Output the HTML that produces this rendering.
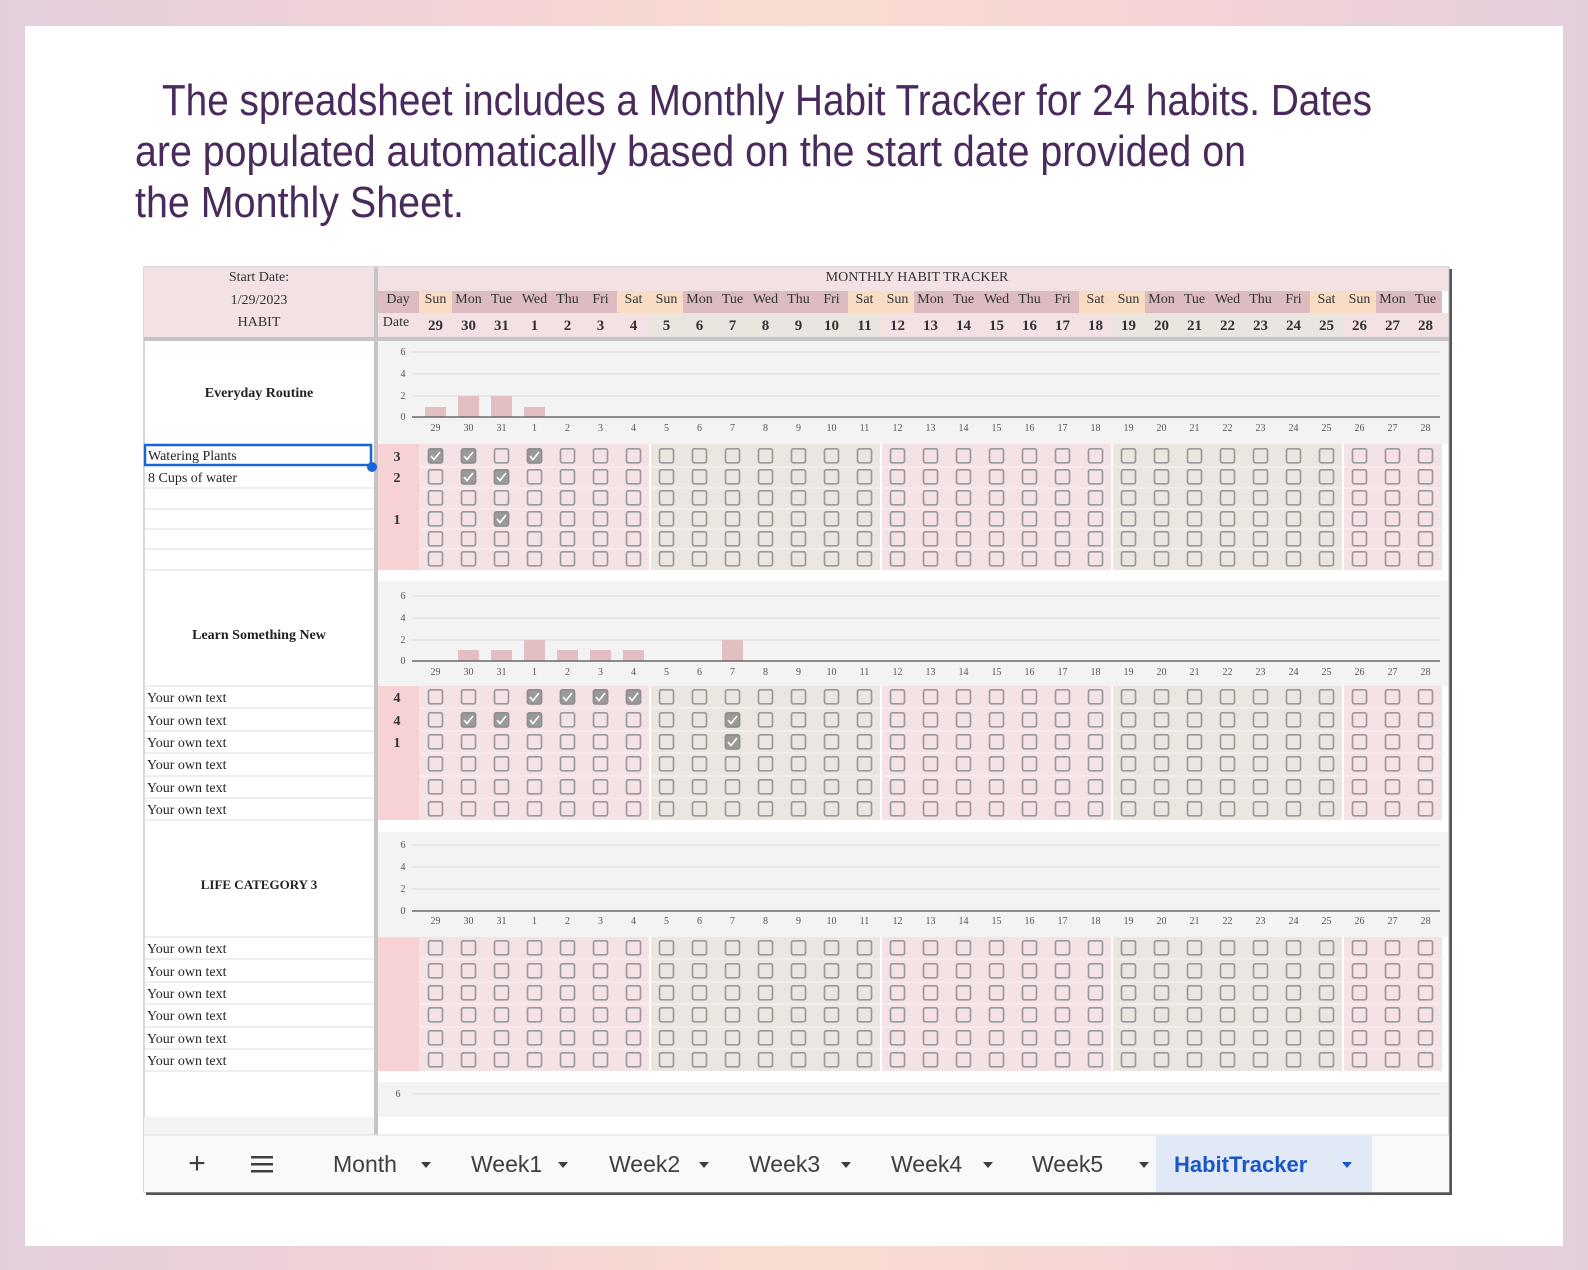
<!DOCTYPE html>
<html><head><meta charset="utf-8"><style>
html,body{margin:0;padding:0;width:1588px;height:1270px;overflow:hidden}
body{background:linear-gradient(90deg,#e3cfdc 0%,#f3d3d6 30%,#f9ddd0 50%,#f4d3d6 75%,#e3cfdc 100%)}
svg{position:absolute;left:0;top:0}
</style></head><body>
<svg width="1588" height="1270" viewBox="0 0 1588 1270" xmlns="http://www.w3.org/2000/svg">
<defs>
<pattern id="cb" patternUnits="userSpaceOnUse" x="419" y="0" width="33" height="16">
<rect x="9.5" y="0.8" width="14" height="14" rx="2" fill="none" stroke="#9a9a9a" stroke-width="1.7"/>
</pattern>
<g id="ck"><rect x="-7" y="-7" width="14" height="14" rx="2" fill="#9a9a9a" stroke="#8e8e8e" stroke-width="1.5"/><polyline points="-4.5,0 -1.5,3.5 4.5,-4" fill="none" stroke="#fff" stroke-width="1.6"/></g>
</defs>
<rect x="25" y="26" width="1538" height="1220" fill="#fff"/>
<g font-family="'Liberation Sans',sans-serif" font-size="44" fill="#4a2a5c">
<text x="162" y="115" textLength="1210" lengthAdjust="spacingAndGlyphs">The spreadsheet includes a Monthly Habit Tracker for 24 habits. Dates</text>
<text x="135" y="166" textLength="1111" lengthAdjust="spacingAndGlyphs">are populated automatically based on the start date provided on</text>
<text x="135" y="217" textLength="329" lengthAdjust="spacingAndGlyphs">the Monthly Sheet.</text>
</g>
<!-- sheet -->
<rect x="146" y="269" width="1306" height="926" fill="#555"/>
<rect x="144" y="267" width="1305" height="925" fill="#fff" stroke="#b0b0b0" stroke-width="1"/>
<!-- header -->
<rect x="144" y="267" width="231" height="70" fill="#f3e1e3"/>
<rect x="378" y="267" width="1070" height="24" fill="#f3e1e3"/>
<rect x="378" y="291" width="1064" height="22" fill="#dcbcc0"/>
<g fill="#f8dcc4"><rect x="419" y="291" width="33" height="22"/><rect x="617" y="291" width="66" height="22"/><rect x="848" y="291" width="66" height="22"/><rect x="1079" y="291" width="66" height="22"/><rect x="1310" y="291" width="66" height="22"/></g>
<rect x="378" y="313" width="1070" height="24" fill="#f3e1e3"/>
<g fill="#ebe5e0"><rect x="650" y="313" width="231" height="24"/><rect x="1112" y="313" width="231" height="24"/></g>
<rect x="144" y="337" width="1305" height="4" fill="#c4c4c4"/>
<rect x="374" y="267" width="4" height="868" fill="#c4c4c4"/>
<g font-family="'Liberation Serif',serif" fill="#333" font-size="14" text-anchor="middle">
<text x="259" y="281">Start Date:</text><text x="259" y="304">1/29/2023</text><text x="259" y="326">HABIT</text>
<text x="917" y="281">MONTHLY HABIT TRACKER</text>
<text x="398" y="303">Day</text><text x="396" y="326">Date</text>
<text y="303"><tspan x="435.5">Sun</tspan><tspan x="468.5">Mon</tspan><tspan x="501.5">Tue</tspan><tspan x="534.5">Wed</tspan><tspan x="567.5">Thu</tspan><tspan x="600.5">Fri</tspan><tspan x="633.5">Sat</tspan><tspan x="666.5">Sun</tspan><tspan x="699.5">Mon</tspan><tspan x="732.5">Tue</tspan><tspan x="765.5">Wed</tspan><tspan x="798.5">Thu</tspan><tspan x="831.5">Fri</tspan><tspan x="864.5">Sat</tspan><tspan x="897.5">Sun</tspan><tspan x="930.5">Mon</tspan><tspan x="963.5">Tue</tspan><tspan x="996.5">Wed</tspan><tspan x="1029.5">Thu</tspan><tspan x="1062.5">Fri</tspan><tspan x="1095.5">Sat</tspan><tspan x="1128.5">Sun</tspan><tspan x="1161.5">Mon</tspan><tspan x="1194.5">Tue</tspan><tspan x="1227.5">Wed</tspan><tspan x="1260.5">Thu</tspan><tspan x="1293.5">Fri</tspan><tspan x="1326.5">Sat</tspan><tspan x="1359.5">Sun</tspan><tspan x="1392.5">Mon</tspan><tspan x="1425.5">Tue</tspan></text>
<text y="330" font-weight="bold" font-size="15"><tspan x="435.5">29</tspan><tspan x="468.5">30</tspan><tspan x="501.5">31</tspan><tspan x="534.5">1</tspan><tspan x="567.5">2</tspan><tspan x="600.5">3</tspan><tspan x="633.5">4</tspan><tspan x="666.5">5</tspan><tspan x="699.5">6</tspan><tspan x="732.5">7</tspan><tspan x="765.5">8</tspan><tspan x="798.5">9</tspan><tspan x="831.5">10</tspan><tspan x="864.5">11</tspan><tspan x="897.5">12</tspan><tspan x="930.5">13</tspan><tspan x="963.5">14</tspan><tspan x="996.5">15</tspan><tspan x="1029.5">16</tspan><tspan x="1062.5">17</tspan><tspan x="1095.5">18</tspan><tspan x="1128.5">19</tspan><tspan x="1161.5">20</tspan><tspan x="1194.5">21</tspan><tspan x="1227.5">22</tspan><tspan x="1260.5">23</tspan><tspan x="1293.5">24</tspan><tspan x="1326.5">25</tspan><tspan x="1359.5">26</tspan><tspan x="1392.5">27</tspan><tspan x="1425.5">28</tspan></text>
</g>

<!-- charts backgrounds -->
<g fill="#f3f3f3"><rect x="378" y="341" width="1070" height="103"/><rect x="378" y="581" width="1070" height="105"/><rect x="378" y="832" width="1070" height="105"/><rect x="378" y="1082" width="1070" height="35"/><rect x="144" y="1117" width="230" height="18"/></g>
<g stroke="#e0e0e0" stroke-width="1.2">
<line x1="412" y1="352" x2="1440" y2="352"/><line x1="412" y1="374" x2="1440" y2="374"/><line x1="412" y1="396" x2="1440" y2="396"/>
<line x1="412" y1="596" x2="1440" y2="596"/><line x1="412" y1="618" x2="1440" y2="618"/><line x1="412" y1="640" x2="1440" y2="640"/>
<line x1="412" y1="845" x2="1440" y2="845"/><line x1="412" y1="867" x2="1440" y2="867"/><line x1="412" y1="889" x2="1440" y2="889"/>
<line x1="412" y1="1094" x2="1440" y2="1094"/>
</g>
<g fill="#e3bec2">
<rect x="425" y="407" width="21" height="10"/><rect x="458" y="396" width="21" height="21"/><rect x="491" y="396" width="21" height="21"/><rect x="524" y="407" width="21" height="10"/>
<rect x="458" y="650" width="21" height="11"/><rect x="491" y="650" width="21" height="11"/><rect x="524" y="640" width="21" height="21"/><rect x="557" y="650" width="21" height="11"/><rect x="590" y="650" width="21" height="11"/><rect x="623" y="650" width="21" height="11"/><rect x="722" y="640" width="21" height="21"/>
</g>
<g stroke="#6b6b6b" stroke-width="1.6"><line x1="412" y1="417" x2="1440" y2="417"/><line x1="412" y1="661" x2="1440" y2="661"/><line x1="412" y1="911" x2="1440" y2="911"/></g>
<g font-family="'Liberation Serif',serif" font-size="10" fill="#555" text-anchor="middle">
<text x="403"><tspan y="355">6</tspan><tspan x="403" y="377">4</tspan><tspan x="403" y="399">2</tspan><tspan x="403" y="420">0</tspan></text>
<text x="403"><tspan y="599">6</tspan><tspan x="403" y="621">4</tspan><tspan x="403" y="643">2</tspan><tspan x="403" y="664">0</tspan></text>
<text x="403"><tspan y="848">6</tspan><tspan x="403" y="870">4</tspan><tspan x="403" y="892">2</tspan><tspan x="403" y="914">0</tspan></text>
<text x="398" y="1097">6</text>
<text y="431"><tspan x="435.5">29</tspan><tspan x="468.5">30</tspan><tspan x="501.5">31</tspan><tspan x="534.5">1</tspan><tspan x="567.5">2</tspan><tspan x="600.5">3</tspan><tspan x="633.5">4</tspan><tspan x="666.5">5</tspan><tspan x="699.5">6</tspan><tspan x="732.5">7</tspan><tspan x="765.5">8</tspan><tspan x="798.5">9</tspan><tspan x="831.5">10</tspan><tspan x="864.5">11</tspan><tspan x="897.5">12</tspan><tspan x="930.5">13</tspan><tspan x="963.5">14</tspan><tspan x="996.5">15</tspan><tspan x="1029.5">16</tspan><tspan x="1062.5">17</tspan><tspan x="1095.5">18</tspan><tspan x="1128.5">19</tspan><tspan x="1161.5">20</tspan><tspan x="1194.5">21</tspan><tspan x="1227.5">22</tspan><tspan x="1260.5">23</tspan><tspan x="1293.5">24</tspan><tspan x="1326.5">25</tspan><tspan x="1359.5">26</tspan><tspan x="1392.5">27</tspan><tspan x="1425.5">28</tspan></text>
<text y="675"><tspan x="435.5">29</tspan><tspan x="468.5">30</tspan><tspan x="501.5">31</tspan><tspan x="534.5">1</tspan><tspan x="567.5">2</tspan><tspan x="600.5">3</tspan><tspan x="633.5">4</tspan><tspan x="666.5">5</tspan><tspan x="699.5">6</tspan><tspan x="732.5">7</tspan><tspan x="765.5">8</tspan><tspan x="798.5">9</tspan><tspan x="831.5">10</tspan><tspan x="864.5">11</tspan><tspan x="897.5">12</tspan><tspan x="930.5">13</tspan><tspan x="963.5">14</tspan><tspan x="996.5">15</tspan><tspan x="1029.5">16</tspan><tspan x="1062.5">17</tspan><tspan x="1095.5">18</tspan><tspan x="1128.5">19</tspan><tspan x="1161.5">20</tspan><tspan x="1194.5">21</tspan><tspan x="1227.5">22</tspan><tspan x="1260.5">23</tspan><tspan x="1293.5">24</tspan><tspan x="1326.5">25</tspan><tspan x="1359.5">26</tspan><tspan x="1392.5">27</tspan><tspan x="1425.5">28</tspan></text>
<text y="924"><tspan x="435.5">29</tspan><tspan x="468.5">30</tspan><tspan x="501.5">31</tspan><tspan x="534.5">1</tspan><tspan x="567.5">2</tspan><tspan x="600.5">3</tspan><tspan x="633.5">4</tspan><tspan x="666.5">5</tspan><tspan x="699.5">6</tspan><tspan x="732.5">7</tspan><tspan x="765.5">8</tspan><tspan x="798.5">9</tspan><tspan x="831.5">10</tspan><tspan x="864.5">11</tspan><tspan x="897.5">12</tspan><tspan x="930.5">13</tspan><tspan x="963.5">14</tspan><tspan x="996.5">15</tspan><tspan x="1029.5">16</tspan><tspan x="1062.5">17</tspan><tspan x="1095.5">18</tspan><tspan x="1128.5">19</tspan><tspan x="1161.5">20</tspan><tspan x="1194.5">21</tspan><tspan x="1227.5">22</tspan><tspan x="1260.5">23</tspan><tspan x="1293.5">24</tspan><tspan x="1326.5">25</tspan><tspan x="1359.5">26</tspan><tspan x="1392.5">27</tspan><tspan x="1425.5">28</tspan></text>
</g>

<!-- row band backgrounds -->
<g id="bands1">
<rect x="378" y="444" width="41" height="126" fill="#f6d2d4"/>
<rect x="419" y="444" width="230" height="126" fill="#f4e2e4"/><rect x="651" y="444" width="229" height="126" fill="#ece6e1"/><rect x="882" y="444" width="229" height="126" fill="#f4e2e4"/><rect x="1113" y="444" width="229" height="126" fill="#ece6e1"/><rect x="1344" y="444" width="98" height="126" fill="#f4e2e4"/>
</g>
<g>
<rect x="378" y="686" width="41" height="134" fill="#f6d2d4"/>
<rect x="419" y="686" width="230" height="134" fill="#f4e2e4"/><rect x="651" y="686" width="229" height="134" fill="#ece6e1"/><rect x="882" y="686" width="229" height="134" fill="#f4e2e4"/><rect x="1113" y="686" width="229" height="134" fill="#ece6e1"/><rect x="1344" y="686" width="98" height="134" fill="#f4e2e4"/>
</g>
<g>
<rect x="378" y="937" width="41" height="134" fill="#f6d2d4"/>
<rect x="419" y="937" width="230" height="134" fill="#f4e2e4"/><rect x="651" y="937" width="229" height="134" fill="#ece6e1"/><rect x="882" y="937" width="229" height="134" fill="#f4e2e4"/><rect x="1113" y="937" width="229" height="134" fill="#ece6e1"/><rect x="1344" y="937" width="98" height="134" fill="#f4e2e4"/>
</g>
<g stroke="#fbf1f2" stroke-width="1">
<line x1="419" y1="467" x2="1442" y2="467"/><line x1="419" y1="488" x2="1442" y2="488"/><line x1="419" y1="509" x2="1442" y2="509"/><line x1="419" y1="529" x2="1442" y2="529"/><line x1="419" y1="549" x2="1442" y2="549"/>
<line x1="419" y1="708" x2="1442" y2="708"/><line x1="419" y1="731" x2="1442" y2="731"/><line x1="419" y1="753" x2="1442" y2="753"/><line x1="419" y1="776" x2="1442" y2="776"/><line x1="419" y1="798" x2="1442" y2="798"/>
<line x1="419" y1="959" x2="1442" y2="959"/><line x1="419" y1="982" x2="1442" y2="982"/><line x1="419" y1="1004" x2="1442" y2="1004"/><line x1="419" y1="1027" x2="1442" y2="1027"/><line x1="419" y1="1049" x2="1442" y2="1049"/>
</g>
<!-- checkbox rows -->
<g fill="url(#cb)">
<g transform="translate(0,448)"><rect x="419" y="0" width="1023" height="16"/></g>
<g transform="translate(0,469)"><rect x="419" y="0" width="1023" height="16"/></g>
<g transform="translate(0,490)"><rect x="419" y="0" width="1023" height="16"/></g>
<g transform="translate(0,511)"><rect x="419" y="0" width="1023" height="16"/></g>
<g transform="translate(0,531)"><rect x="419" y="0" width="1023" height="16"/></g>
<g transform="translate(0,551)"><rect x="419" y="0" width="1023" height="16"/></g>
<g transform="translate(0,689)"><rect x="419" y="0" width="1023" height="16"/></g>
<g transform="translate(0,712)"><rect x="419" y="0" width="1023" height="16"/></g>
<g transform="translate(0,734)"><rect x="419" y="0" width="1023" height="16"/></g>
<g transform="translate(0,756)"><rect x="419" y="0" width="1023" height="16"/></g>
<g transform="translate(0,779)"><rect x="419" y="0" width="1023" height="16"/></g>
<g transform="translate(0,801)"><rect x="419" y="0" width="1023" height="16"/></g>
<g transform="translate(0,940)"><rect x="419" y="0" width="1023" height="16"/></g>
<g transform="translate(0,963)"><rect x="419" y="0" width="1023" height="16"/></g>
<g transform="translate(0,985)"><rect x="419" y="0" width="1023" height="16"/></g>
<g transform="translate(0,1007)"><rect x="419" y="0" width="1023" height="16"/></g>
<g transform="translate(0,1030)"><rect x="419" y="0" width="1023" height="16"/></g>
<g transform="translate(0,1052)"><rect x="419" y="0" width="1023" height="16"/></g>
</g>
<!-- checked -->
<use href="#ck" x="435.5" y="456"/><use href="#ck" x="468.5" y="456"/><use href="#ck" x="534.5" y="456"/>
<use href="#ck" x="468.5" y="477"/><use href="#ck" x="501.5" y="477"/>
<use href="#ck" x="501.5" y="519"/>
<use href="#ck" x="534.5" y="697"/><use href="#ck" x="567.5" y="697"/><use href="#ck" x="600.5" y="697"/><use href="#ck" x="633.5" y="697"/>
<use href="#ck" x="468.5" y="720"/><use href="#ck" x="501.5" y="720"/><use href="#ck" x="534.5" y="720"/><use href="#ck" x="732.5" y="720"/>
<use href="#ck" x="732.5" y="742"/>
<g font-family="'Liberation Serif',serif" font-weight="bold" font-size="14" fill="#333" text-anchor="middle">
<text x="397" y="461">3</text><text x="397" y="482">2</text><text x="397" y="524">1</text>
<text x="397" y="702">4</text><text x="397" y="725">4</text><text x="397" y="747">1</text>
</g>

<!-- left column -->
<g stroke="#dedede" stroke-width="1">
<line x1="144" y1="488" x2="374" y2="488"/><line x1="144" y1="509" x2="374" y2="509"/><line x1="144" y1="529" x2="374" y2="529"/><line x1="144" y1="549" x2="374" y2="549"/><line x1="144" y1="570" x2="374" y2="570"/>
<line x1="144" y1="686" x2="374" y2="686"/><line x1="144" y1="708" x2="374" y2="708"/><line x1="144" y1="731" x2="374" y2="731"/><line x1="144" y1="753" x2="374" y2="753"/><line x1="144" y1="776" x2="374" y2="776"/><line x1="144" y1="798" x2="374" y2="798"/><line x1="144" y1="820" x2="374" y2="820"/>
<line x1="144" y1="937" x2="374" y2="937"/><line x1="144" y1="959" x2="374" y2="959"/><line x1="144" y1="982" x2="374" y2="982"/><line x1="144" y1="1004" x2="374" y2="1004"/><line x1="144" y1="1027" x2="374" y2="1027"/><line x1="144" y1="1049" x2="374" y2="1049"/><line x1="144" y1="1071" x2="374" y2="1071"/>
</g>
<rect x="145" y="445" width="226" height="20" fill="none" stroke="#1a66d6" stroke-width="2.5"/>
<circle cx="372" cy="467" r="5" fill="#1a66d6"/>
<g font-family="'Liberation Serif',serif" fill="#222" font-size="14">
<text x="259" y="397" text-anchor="middle" font-weight="bold">Everyday Routine</text>
<text x="259" y="639" text-anchor="middle" font-weight="bold">Learn Something New</text>
<text x="259" y="889" text-anchor="middle" font-weight="bold" font-size="13">LIFE CATEGORY 3</text>
<text x="148" y="460">Watering Plants</text><text x="148" y="482">8 Cups of water</text>
<text x="147" y="702">Your own text</text><text x="147" y="725">Your own text</text><text x="147" y="747">Your own text</text><text x="147" y="769">Your own text</text><text x="147" y="792">Your own text</text><text x="147" y="814">Your own text</text>
<text x="147" y="953">Your own text</text><text x="147" y="976">Your own text</text><text x="147" y="998">Your own text</text><text x="147" y="1020">Your own text</text><text x="147" y="1043">Your own text</text><text x="147" y="1065">Your own text</text>
</g>

<!-- tab bar -->
<rect x="144" y="1135" width="1305" height="57" fill="#f8f9fa"/>
<line x1="144" y1="1135" x2="1449" y2="1135" stroke="#dadce0"/>
<rect x="1156" y="1136" width="216" height="56" fill="#e1e9f6"/>
<g font-family="'Liberation Sans',sans-serif" font-size="23" fill="#3c4043">
<text x="197" y="1173" text-anchor="middle" font-size="30">+</text>
<rect x="251" y="1156" width="22" height="2.5"/><rect x="251" y="1163" width="22" height="2.5"/><rect x="251" y="1170" width="22" height="2.5"/>
<text x="333" y="1172">Month</text><text x="471" y="1172">Week1</text><text x="609" y="1172">Week2</text><text x="749" y="1172">Week3</text><text x="891" y="1172">Week4</text><text x="1032" y="1172">Week5</text>
<text x="1174" y="1172" fill="#1a57c6" font-weight="bold" font-size="22">HabitTracker</text>
</g>
<g fill="#3c4043">
<polygon points="421,1162 431,1162 426,1168"/><polygon points="558,1162 568,1162 563,1168"/><polygon points="699,1162 709,1162 704,1168"/><polygon points="841,1162 851,1162 846,1168"/><polygon points="983,1162 993,1162 988,1168"/><polygon points="1139,1162 1149,1162 1144,1168"/>
<polygon points="1342,1162 1352,1162 1347,1168" fill="#1a57c6"/>
</g>
</svg>
</body></html>
